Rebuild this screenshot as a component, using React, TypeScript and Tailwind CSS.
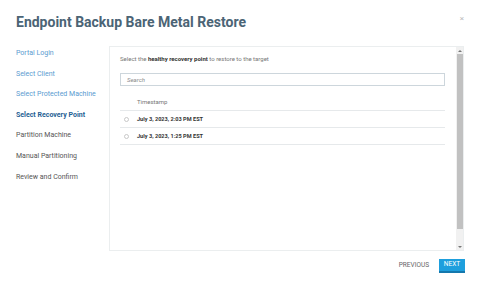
import React from "react";

const steps = [
  { label: "Portal Login", state: "done" },
  { label: "Select Client", state: "done" },
  { label: "Select Protected Machine", state: "done" },
  { label: "Select Recovery Point", state: "active" },
  { label: "Partition Machine", state: "todo" },
  { label: "Manual Partitioning", state: "todo" },
  { label: "Review and Confirm", state: "todo" },
];

const points = ["July 3, 2023, 2:03 PM EST", "July 3, 2023, 1:25 PM EST"];

export default function App() {
  return (
    <div
      className="w-[480px] h-[289px] bg-white relative overflow-hidden"
      style={{ fontFamily: "Roboto, 'Liberation Sans', sans-serif" }}
    >
      <div className="h-[46px] pl-4 pt-[13px]">
        <h1 className="text-[14px] leading-[18px] font-bold text-[#4b6475]">
          Endpoint Backup Bare Metal Restore
        </h1>
      </div>
      <button className="absolute right-[16px] top-[15px] text-[8px] text-[#bbbbbb] leading-none">
        ×
      </button>

      <div className="flex">
        <nav className="w-[93px] ml-4 flex flex-col pt-[1px]">
          {steps.map((s) => (
            <div
              key={s.label}
              className={`h-[20.6px] leading-[12px] text-[7px] whitespace-nowrap ${
                s.state === "done"
                  ? "text-[#5a9bd0]"
                  : s.state === "active"
                  ? "text-[#1f5f94] font-bold"
                  : "text-[#555555]"
              }`}
            >
              {s.label}
            </div>
          ))}
        </nav>

        <div className="w-[355px] h-[205px] border border-[#ebeeef] flex">
          <div className="flex-1 pl-[10px] pr-[11px] pt-[8px]">
            <p className="text-[6px] leading-[8px] text-[#777777]">
              Select the <span className="font-bold text-[#333333]">healthy recovery point</span> to
              restore to the target
            </p>
            <div className="mt-[10px] h-[13px] border border-[#cdd6dc] flex items-center pl-[6px]">
              <span className="text-[6px] italic text-[#888888]">Search</span>
            </div>
            <div className="h-[25px] flex items-center pl-[17px] border-b border-[#e6e9eb]">
              <span className="text-[6px] text-[#777777] pt-[7px]">Timestamp</span>
            </div>
            {points.map((p) => (
              <div key={p} className="h-[17px] flex items-center border-b border-[#e6e9eb]">
                <span className="w-[5px] h-[5px] rounded-full border border-[#c8c8c8] ml-[4px] mr-[8px]" />
                <span className="text-[5.6px] font-bold text-[#333333]">{p}</span>
              </div>
            ))}
          </div>
          <div className="w-[7px] bg-[#f1f1f1] flex flex-col items-center">
            <div className="h-[7px] flex items-center justify-center">
              <div className="w-0 h-0 border-l-[2px] border-r-[2px] border-b-[2px] border-l-transparent border-r-transparent border-b-[#777777]" />
            </div>
            <div className="w-[6px] h-[175px] bg-[#c1c1c1]" />
            <div className="flex-1" />
            <div className="h-[7px] flex items-center justify-center">
              <div className="w-0 h-0 border-l-[2px] border-r-[2px] border-t-[2px] border-l-transparent border-r-transparent border-t-[#777777]" />
            </div>
          </div>
        </div>
      </div>

      <div className="flex justify-end items-center pr-[15px] pt-[8px] gap-[10px]">
        <button className="text-[6.5px] text-[#666666]">PREVIOUS</button>
        <button className="w-[26px] h-[14px] bg-[#1e9fdd] border-b-[2px] border-[#1478ad] text-[6.5px] text-white">
          NEXT
        </button>
      </div>
    </div>
  );
}
